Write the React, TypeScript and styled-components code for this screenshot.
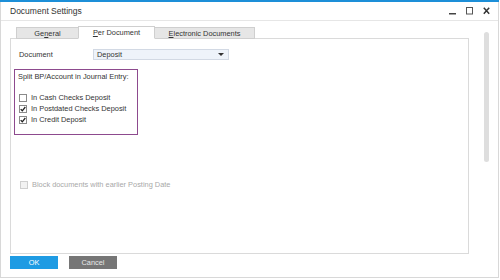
import React from 'react';
import styled, { createGlobalStyle } from 'styled-components';

const GlobalStyle = createGlobalStyle`
    html, body {
        margin: 0;
        padding: 0;
        background: #ffffff;
    }
    body {
        font-family: "Liberation Sans", Arial, sans-serif;
        color: #3a3a3a;
    }
`;

const Window = styled.div`
    width: 499px;
    height: 278px;
    box-sizing: border-box;
    border-left: 1px solid #d8d8d8;
    border-right: 1px solid #d8d8d8;
    border-bottom: 1px solid #d8d8d8;
    display: flex;
    flex-direction: column;
    background: #fff;
`;

const TopBar = styled.div`
    height: 2px;
    background: #1d8fd8;
    margin: 0 -1px;
`;

const TitleRow = styled.div`
    height: 18px;
    border-bottom: 1px solid #e6e6e6;
    display: flex;
    align-items: center;
    padding-left: 9px;
`;

const Title = styled.div`
    font-size: 8.5px;
    color: #333;
    flex: 1;
`;

const Controls = styled.div`
    display: flex;
    align-items: center;
    gap: 10px;
    padding-right: 8px;
    margin-top: -1px;
`;

const Body = styled.div`
    flex: 1;
    display: flex;
    padding-left: 9px;
`;

const Main = styled.div`
    width: 459px;
    display: flex;
    flex-direction: column;
`;

const Tabs = styled.div`
    display: flex;
    padding-left: 7px;
    margin-top: 5px;
    height: 12px;
    align-items: flex-end;
`;

const Tab = styled.div<{ $active?: boolean; $w: number }>`
    width: ${(p) => p.$w}px;
    height: ${(p) => (p.$active ? 13 : 12)}px;
    box-sizing: border-box;
    border: 1px solid #cfcfcf;
    border-bottom: ${(p) => (p.$active ? '1px solid #fff' : '1px solid #cfcfcf')};
    background: ${(p) => (p.$active ? '#fff' : '#e6e6e6')};
    margin-bottom: -1px;
    margin-left: -1px;
    position: relative;
    z-index: ${(p) => (p.$active ? 2 : 1)};
    display: flex;
    align-items: center;
    justify-content: center;
    font-size: 7.4px;
    color: #333;
`;

const Panel = styled.div`
    height: 216px;
    box-sizing: border-box;
    border: 1px solid #dadada;
    padding: 8px 8px 0 8px;
    display: flex;
    flex-direction: column;
`;

const FieldRow = styled.div`
    display: flex;
    align-items: center;
    height: 12px;
    margin-top: 1px;
`;

const Label = styled.div`
    width: 74px;
    font-size: 7.4px;
    color: #333;
`;

const Select = styled.div`
    width: 136px;
    height: 11px;
    box-sizing: border-box;
    border: 1px solid #d2d9e4;
    background: #eef3fa;
    display: flex;
    align-items: center;
    justify-content: space-between;
    padding: 0 4px 0 3px;
    font-size: 7.4px;
    color: #333;
`;

const Arrow = styled.span`
    width: 0;
    height: 0;
    border-left: 3px solid transparent;
    border-right: 3px solid transparent;
    border-top: 3.5px solid #333;
`;

const GroupBox = styled.div`
    margin-top: 9px;
    margin-left: -5px;
    width: 124px;
    height: 66px;
    box-sizing: border-box;
    border: 1.5px solid #8d4a8e;
    padding: 2px 0 0 3px;
    display: flex;
    flex-direction: column;
`;

const GroupTitle = styled.div`
    font-size: 7.4px;
    color: #333;
    height: 10px;
    line-height: 10px;
    margin-bottom: 10px;
`;

const CheckRow = styled.div<{ $disabled?: boolean }>`
    display: flex;
    align-items: center;
    gap: 4px;
    height: 11px;
    padding-left: 1px;
    font-size: 7.4px;
    color: ${(p) => (p.$disabled ? '#a8a8a8' : '#333')};
`;

const Box = styled.span<{ $disabled?: boolean }>`
    width: 8px;
    height: 8px;
    box-sizing: border-box;
    border: 1px solid ${(p) => (p.$disabled ? '#cfcfcf' : '#8a8a8a')};
    background: ${(p) => (p.$disabled ? '#f2f2f2' : '#fff')};
    display: flex;
    align-items: center;
    justify-content: center;
`;

const Spacer = styled.div`
    height: 44px;
`;

const Rail = styled.div`
    flex: 1;
    display: flex;
    justify-content: center;
    padding-top: 11px;
    padding-left: 6px;
`;

const Thumb = styled.div`
    width: 5px;
    height: 130px;
    border-radius: 3px;
    background: #dedede;
`;

const Footer = styled.div`
    height: 23px;
    display: flex;
    gap: 11px;
    padding: 2px 0 0 9px;
    box-sizing: border-box;
`;

const Button = styled.div<{ $primary?: boolean }>`
    width: 48px;
    height: 13px;
    display: flex;
    align-items: center;
    justify-content: center;
    font-size: 7.4px;
    color: ${(p) => (p.$primary ? '#fff' : '#e8e8e8')};
    background: ${(p) => (p.$primary ? '#1e9be3' : '#767676')};
`;

const U = styled.span`
    text-decoration: underline;
`;

function Check() {
    return (
        <svg width="6" height="6" viewBox="0 0 6 6">
            <path d="M0.7 3.1 L2.3 4.8 L5.3 1" fill="none" stroke="#222" strokeWidth="1.3" />
        </svg>
    );
}

function CheckItem({ label, checked, disabled }: { label: string; checked?: boolean; disabled?: boolean }) {
    return (
        <CheckRow $disabled={disabled}>
            <Box $disabled={disabled}>{checked && <Check />}</Box>
            {label}
        </CheckRow>
    );
}

export default function App() {
    return (
        <>
            <GlobalStyle />
            <Window>
                <TopBar />
                <TitleRow>
                    <Title>Document Settings</Title>
                    <Controls>
                        <svg width="7" height="8" viewBox="0 0 7 8">
                            <rect x="0" y="6" width="7" height="1.5" fill="#444" />
                        </svg>
                        <svg width="7" height="8" viewBox="0 0 7 8">
                            <rect x="0.5" y="0.5" width="6" height="6.5" fill="none" stroke="#555" strokeWidth="1" />
                        </svg>
                        <svg width="7" height="8" viewBox="0 0 7 8">
                            <path d="M0.8 0.8 L6.2 6.7 M6.2 0.8 L0.8 6.7" stroke="#333" strokeWidth="1.5" />
                        </svg>
                    </Controls>
                </TitleRow>
                <Body>
                    <Main>
                        <Tabs>
                            <Tab $w={63}>
                                Ge<U>n</U>eral
                            </Tab>
                            <Tab $w={77} $active>
                                <U>P</U>er Document
                            </Tab>
                            <Tab $w={101}>
                                <U>E</U>lectronic Documents
                            </Tab>
                        </Tabs>
                        <Panel>
                            <FieldRow>
                                <Label>Document</Label>
                                <Select>
                                    Deposit
                                    <Arrow />
                                </Select>
                            </FieldRow>
                            <GroupBox>
                                <GroupTitle>Split BP/Account in Journal Entry:</GroupTitle>
                                <CheckItem label="In Cash Checks Deposit" />
                                <CheckItem label="In Postdated Checks Deposit" checked />
                                <CheckItem label="In Credit Deposit" checked />
                            </GroupBox>
                            <Spacer />
                            <CheckItem label="Block documents with earlier Posting Date" disabled />
                        </Panel>
                    </Main>
                    <Rail>
                        <Thumb />
                    </Rail>
                </Body>
                <Footer>
                    <Button $primary>OK</Button>
                    <Button>Cancel</Button>
                </Footer>
            </Window>
        </>
    );
}
